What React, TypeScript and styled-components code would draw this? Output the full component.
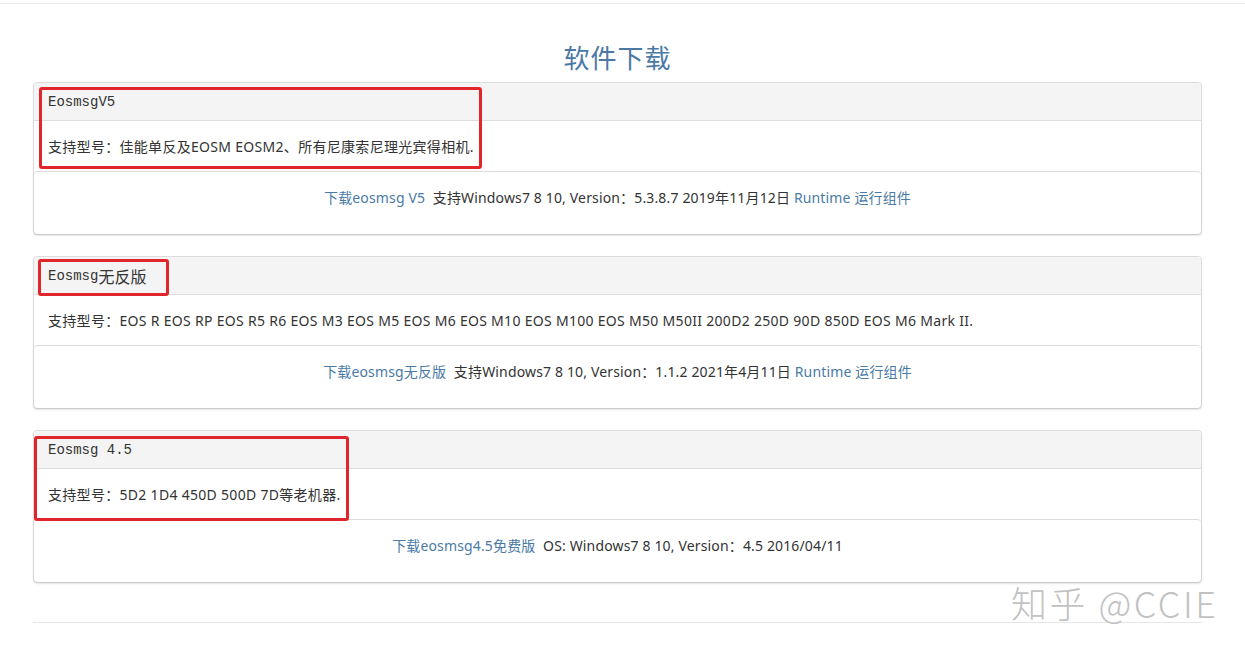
import React from "react";
import styled, { createGlobalStyle } from "styled-components";

const Global = createGlobalStyle`
  html, body { margin: 0; padding: 0; background: #fff; }
  body { font-family: "Noto Sans", "Noto Sans CJK SC", sans-serif; color: #333; font-size: 14px; }
`;

const Page = styled.div`
  position: relative;
  width: 1245px;
  height: 653px;
  padding-top: 3px;
  box-sizing: border-box;
  overflow: hidden;
`;

const TopRule = styled.div`
  border-top: 1px solid #ebebeb;
`;

const Container = styled.main`
  width: 1169px;
  margin-left: 33px;
  padding-bottom: 18px;
  border-bottom: 1px solid #e6e6e6;
`;

const Title = styled.h2`
  margin: 0;
  padding-top: 35px;
  height: 43px;
  line-height: 36px;
  text-align: center;
  font-size: 26px;
  font-weight: 400;
  letter-spacing: 1px;
  color: #4b79a6;
  font-family: "Noto Sans CJK SC", sans-serif;
`;

const Panel = styled.section`
  position: relative;
  border: 1px solid #dcdcdc;
  border-radius: 4px;
  background: #fff;
  box-shadow: 0 1px 2px rgba(0, 0, 0, 0.08);
  margin-bottom: 21px;
`;

const Header = styled.div`
  height: 37px;
  padding: 0 14px;
  display: flex;
  align-items: center;
  background: #f4f4f4;
  border-bottom: 1px solid #dedede;
  border-radius: 4px 4px 0 0;
  font-family: "Liberation Mono", monospace;
  font-size: 14px;
  color: #333;
`;

const Cjk = styled.span`
  font-family: "Noto Sans CJK SC", sans-serif;
  font-size: 16px;
`;

const Body = styled.div`
  padding: 15px 14px 14px;
  line-height: 21px;
  font-size: 14px;
  letter-spacing: 0.3px;
`;

const Footer = styled.div`
  border-top: 1px solid #dcdcdc;
  border-radius: 4px;
  padding: 15px 15px 26px;
  line-height: 21px;
  text-align: center;
  font-size: 14px;
  letter-spacing: 0.15px;
  box-shadow: 0 1px 2px rgba(0, 0, 0, 0.1);
`;

const Link = styled.a`
  color: #4a7aa6;
  text-decoration: none;
`;

const Mark = styled.div<{ $l: number; $t: number; $w: number; $h: number }>`
  position: absolute;
  left: ${(p) => p.$l}px;
  top: ${(p) => p.$t}px;
  width: ${(p) => p.$w}px;
  height: ${(p) => p.$h}px;
  border: 3px solid #e0262b;
  border-radius: 3px;
  box-sizing: border-box;
  pointer-events: none;
`;

const Watermark = styled.div`
  position: absolute;
  left: 1011px;
  top: 579px;
  font-family: "Noto Sans CJK SC", sans-serif;
  font-weight: 300;
  font-size: 36px;
  line-height: 46px;
  color: #c2c2c2;
  letter-spacing: 2.5px;
  text-shadow: 0 0 2px #fff;
`;

const panels = [
  {
    title: <>EosmsgV5</>,
    body: "支持型号：佳能单反及EOSM EOSM2、所有尼康索尼理光宾得相机.",
    link: "下载eosmsg V5",
    info: "支持Windows7 8 10, Version：5.3.8.7 2019年11月12日",
    runtime: true,
    mark: { l: 5, t: 4, w: 443, h: 82 },
  },
  {
    title: (
      <>
        Eosmsg<Cjk>无反版</Cjk>
      </>
    ),
    body:
      "支持型号：EOS R EOS RP EOS R5 R6 EOS M3 EOS M5 EOS M6 EOS M10 EOS M100 EOS M50 M50II 200D2 250D 90D 850D EOS M6 Mark II.",
    link: "下载eosmsg无反版",
    info: "支持Windows7 8 10, Version：1.1.2 2021年4月11日",
    runtime: true,
    mark: { l: 4, t: 2, w: 131, h: 37 },
  },
  {
    title: <>Eosmsg 4.5</>,
    body: "支持型号：5D2 1D4 450D 500D 7D等老机器.",
    link: "下载eosmsg4.5免费版",
    info: "OS: Windows7 8 10, Version：4.5 2016/04/11",
    runtime: false,
    mark: { l: 0, t: 5, w: 315, h: 85 },
  },
];

export default function App() {
  return (
    <>
      <Global />
      <Page>
        <TopRule />
        <Container>
          <Title>软件下载</Title>
          {panels.map((p, i) => (
            <Panel key={i}>
              <Header>{p.title}</Header>
              <Body>{p.body}</Body>
              <Footer>
                <Link href="#">{p.link}</Link>&nbsp;&nbsp;{p.info}
                {p.runtime && (
                  <>
                    {" "}
                    <Link href="#">Runtime 运行组件</Link>
                  </>
                )}
              </Footer>
              <Mark $l={p.mark.l} $t={p.mark.t} $w={p.mark.w} $h={p.mark.h} />
            </Panel>
          ))}
        </Container>
        <Watermark>知乎 @CCIE</Watermark>
      </Page>
    </>
  );
}
